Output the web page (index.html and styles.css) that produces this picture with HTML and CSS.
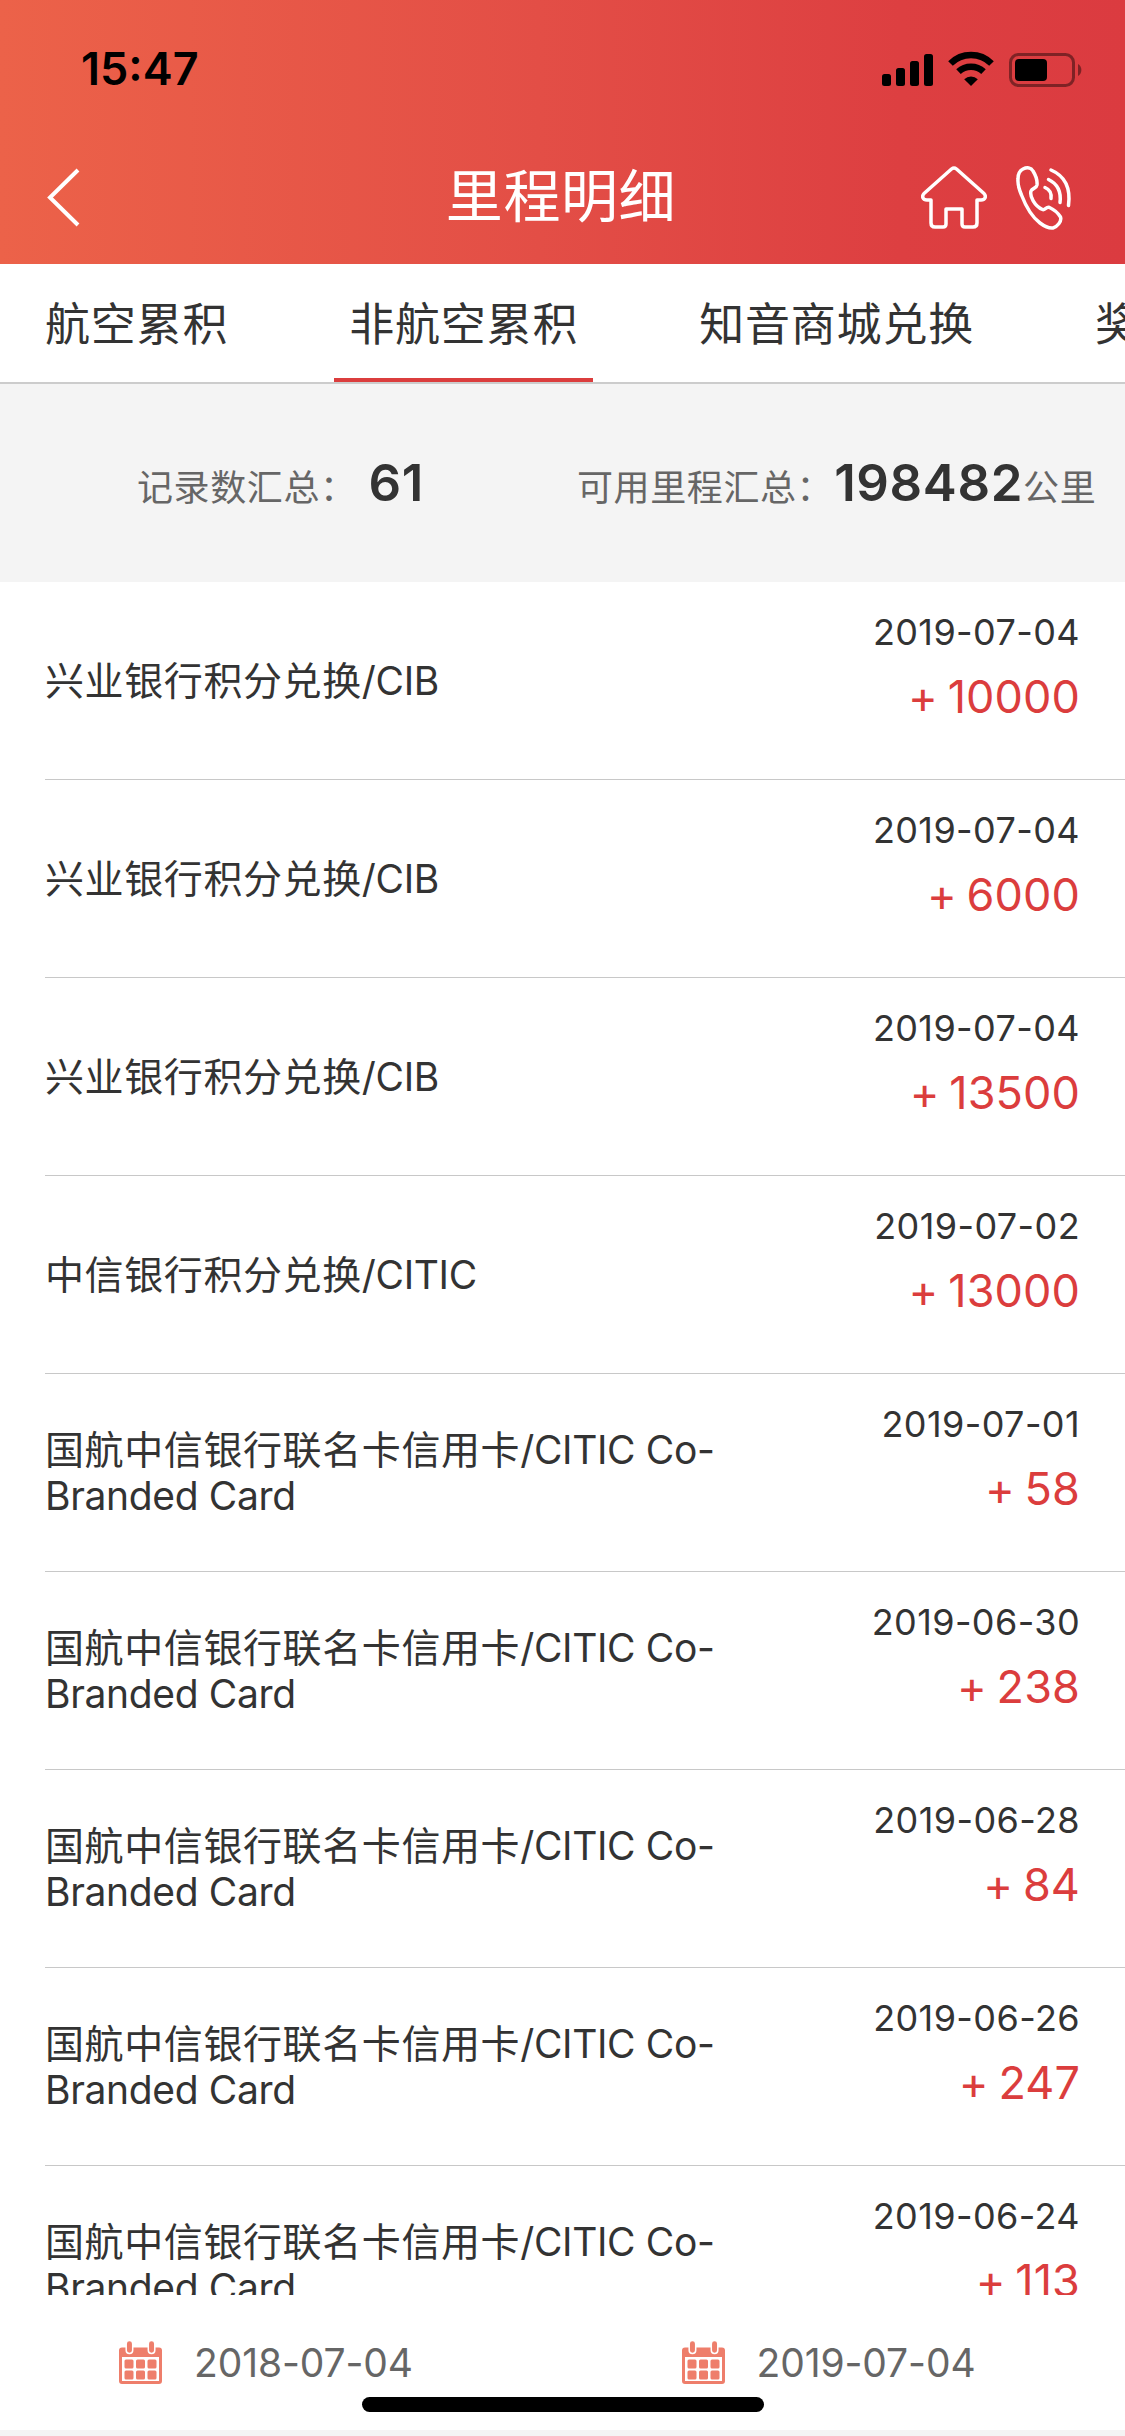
FILE: index.html
```html
<!DOCTYPE html>
<html lang="zh-CN">
<head>
  <meta charset="UTF-8">
  <title>里程明细</title>
  <link rel="stylesheet" href="styles.css">
</head>
<body>
<div class="page">
  <!-- Header -->
  <header class="header">
    <div class="status-bar">
      <span class="time">15:47</span>
      <svg class="status-icons" width="202" height="38" viewBox="0 0 202 38">
        <rect x="0" y="24" width="9" height="12" rx="2.5"/>
        <rect x="14" y="18" width="9" height="18" rx="2.5"/>
        <rect x="28" y="11" width="9" height="25" rx="2.5"/>
        <rect x="42" y="4" width="9" height="32" rx="2.5"/>
        <g fill="none" stroke="#000" stroke-width="6.5">
          <path d="M68.500 13.500A29 29 0 0 1 109.500 13.500"/>
          <path d="M76.500 21.700A18 18 0 0 1 101.500 21.700"/>
        </g>
        <path d="M89 36L82.200 29.200A10 10 0 0 1 95.800 29.200Z"/>
        <g opacity=".42">
          <rect x="128.500" y="4.500" width="63" height="31" rx="8" fill="none" stroke="#000" stroke-width="3"/>
          <path d="M196 14a7 7 0 0 1 0 12z"/>
        </g>
        <rect x="133" y="9" width="32" height="22" rx="4"/>
      </svg>
    </div>
    <div class="nav-bar">
      <svg class="back" width="36" height="64" viewBox="0 0 36 64">
        <path d="M34 4L6 31.500L34 59" fill="none" stroke="#fff" stroke-width="4"/>
      </svg>
      <h1 class="title">里程明细</h1>
      <div class="nav-icons">
        <svg width="66" height="68" viewBox="0 0 66 68">
          <path d="M30.500 5Q33 3 35.500 5L63 29.500Q65 32 64 34Q63 36 60 36H56V59Q56 63 52 63H44Q41 63 41 60V45H25V60Q25 63 22 63H14Q10 63 10 59V36H6Q3 36 2 34Q1 32 3 29.500Z"/>
        </svg>
        <svg width="58" height="68" viewBox="0 0 58 68">
          <path d="M7 5C11 3 15 3.500 17 7C19.500 11 21.500 16 21 21C20.500 24.500 16 24 15 27C13.500 32 18.500 42 26.500 45.500C29 46.500 30 42.500 33.500 43.500C38 45.500 42 49 44.500 53C46 57.500 41 63 37 64C33 64.500 28 62 24 59C16 53 9.500 41.500 5.500 31C3 25 1.500 20 2 15C2 10 4 6.500 7 5Z"/>
          <path d="M29 23.500Q36 26.500 35 34.500M32.500 15.500Q46 22 44 38.500M35 6Q56 15 52.500 41.500"/>
        </svg>
      </div>
    </div>
  </header>

  <!-- Tabs -->
  <nav class="tabs">
    <a class="tab">航空累积</a>
    <a class="tab active">非航空累积</a>
    <a class="tab">知音商城兑换</a>
    <a class="tab">奖励兑换</a>
  </nav>

  <!-- Totals -->
  <div class="summary">
    <div class="total">记录数汇总：<b>61</b></div>
    <div class="total miles-total">可用里程汇总：<b>198482</b>公里</div>
  </div>

  <!-- Records -->
  <ul class="list" id="list"></ul>

  <!-- Date range -->
  <footer class="footer">
    <div class="date-pick">
      <svg class="calendar"><use href="#calendar"/></svg>
      <span>2018-07-04</span>
    </div>
    <div class="date-pick">
      <svg class="calendar"><use href="#calendar"/></svg>
      <span>2019-07-04</span>
    </div>
    <div class="home-indicator"></div>
  </footer>
</div>

<svg class="symbols">
  <symbol id="calendar" viewBox="0 0 44 44">
    <path fill="#ee7e6b" fill-rule="evenodd" d="M3 6.500H40Q43 6.500 43 9.500V40Q43 43 40 43H3Q0 43 0 40V9.500Q0 6.500 3 6.500ZM3 16V40H40V16Z"/>
    <g fill="#ee7e6b" stroke="#fff" stroke-width="1.500">
      <rect x="7.200" y="-.5" width="6.500" height="13" rx="3.200"/>
      <rect x="29.300" y="-.5" width="6.500" height="13" rx="3.200"/>
    </g>
    <g fill="#ee7e6b">
      <rect x="5.500" y="18.500" width="9" height="9" rx="1.500"/>
      <rect x="17" y="18.500" width="9" height="9" rx="1.500"/>
      <rect x="28.500" y="18.500" width="9" height="9" rx="1.500"/>
      <rect x="5.500" y="29.500" width="9" height="9" rx="1.500"/>
      <rect x="17" y="29.500" width="9" height="9" rx="1.500"/>
      <rect x="28.500" y="29.500" width="9" height="9" rx="1.500"/>
    </g>
  </symbol>
</svg>

<script>
  const cib = ['兴业银行积分兑换', '/CIB'];
  const citic = ['中信银行积分兑换', '/CITIC'];
  const card = ['国航中信银行联名卡信用卡', '/CITIC Co-Branded Card'];
  const records = [
    [cib, '2019-07-04', 10000],
    [cib, '2019-07-04', 6000],
    [cib, '2019-07-04', 13500],
    [citic, '2019-07-02', 13000],
    [card, '2019-07-01', 58],
    [card, '2019-06-30', 238],
    [card, '2019-06-28', 84],
    [card, '2019-06-26', 247],
    [card, '2019-06-24', 113]
  ];

  document.getElementById('list').innerHTML = records.map(([name, date, miles]) => `
    <li class="record">
      <div class="name">${name[0]}<span class="latin">${name[1]}</span></div>
      <div class="detail">
        <div class="date">${date}</div>
        <div class="miles">+ ${miles}</div>
      </div>
    </li>`).join('');
</script>
</body>
</html>
```
FILE: styles.css
```css
* {
  box-sizing: border-box;
}

body {
  margin: 0;
  font-family: Inter, "Noto Sans CJK SC", sans-serif;
  letter-spacing: 0.6px;
  color: #333;
  background: #f4f4f4;
}

.page {
  display: flex;
  flex-direction: column;
  width: 1125px;
  height: 2436px;
  padding-bottom: 6px;
  overflow: hidden;
}

.header {
  height: 264px;
  flex: none;
  background: linear-gradient(to right, #ec6249, #e34e46 48%, #dd3f41 80%, #db3b40);
}

.status-bar {
  display: flex;
  justify-content: space-between;
  align-items: center;
  height: 132px;
  padding: 6px 41px 0 81px;
}

.time {
  font-size: 45px;
  font-weight: 600;
  line-height: 54px;
  letter-spacing: 0;
  color: #000;
}

.nav-bar {
  display: grid;
  grid-template-columns: 1fr auto 1fr;
  align-items: center;
  height: 132px;
  padding: 0 51px 0 44px;
}

.title {
  margin: 0;
  padding: 0 0 3px 4px;
  font-size: 57px;
  font-weight: 400;
  line-height: 80px;
  color: #fff;
}

.nav-icons {
  display: flex;
  justify-content: flex-end;
  gap: 29px;
}

.nav-icons path {
  fill: none;
  stroke: #fff;
  stroke-width: 3.5;
  stroke-linecap: round;
  stroke-linejoin: round;
}

.tabs {
  display: flex;
  flex: none;
  gap: 91px;
  height: 120px;
  padding-left: 30px;
  background: #fff;
  border-bottom: 2px solid #ccc;
  overflow: hidden;
}

.tab {
  flex: none;
  padding: 0 15px;
  font-size: 45px;
  line-height: 122px;
  letter-spacing: 0.8px;
}

.tab.active {
  border-bottom: 4px solid #db3d3d;
}

.summary {
  display: flex;
  flex: none;
  align-items: center;
  gap: 153px;
  height: 198px;
  padding: 4px 0 0 137px;
  font-size: 36px;
  line-height: 60px;
  color: #666;
  white-space: nowrap;
}

.total b {
  margin-left: 12px;
  font-size: 51px;
  font-weight: 600;
  color: #333;
}

.miles-total b {
  margin-left: 1px;
}

.list {
  flex: 1;
  min-height: 0;
  margin: 0;
  padding: 0 0 0 45px;
  list-style: none;
  background: #fff;
  overflow: hidden;
}

.record {
  display: flex;
  justify-content: space-between;
  height: 198px;
  padding-right: 45px;
  border-bottom: 1px solid #c8c8c8;
}

.name {
  align-self: center;
  width: 690px;
  font-size: 39px;
  line-height: 46px;
}

.latin {
  letter-spacing: -0.35px;
}

.detail {
  padding-top: 25px;
  text-align: right;
}

.date {
  font-size: 36px;
  line-height: 50px;
  letter-spacing: 0.4px;
}

.miles {
  font-size: 45px;
  line-height: 79px;
  letter-spacing: 0.1px;
  word-spacing: -3px;
  color: #db3d3d;
}

.footer {
  position: relative;
  display: grid;
  grid-template-columns: 1fr 1fr;
  flex: none;
  height: 135px;
  background: #fff;
}

.date-pick {
  display: flex;
  align-items: center;
  gap: 31px;
  height: 135px;
  padding-left: 119px;
  font-size: 39px;
  letter-spacing: -0.1px;
  color: #666;
}

.calendar {
  width: 44px;
  height: 44px;
}

/* sits over the footer, centred on the screen */
.home-indicator {
  position: absolute;
  bottom: 18px;
  left: 50%;
  width: 402px;
  height: 15px;
  margin-left: -201px;
  border-radius: 8px;
  background: #000;
}

.symbols {
  display: none;
}
```
